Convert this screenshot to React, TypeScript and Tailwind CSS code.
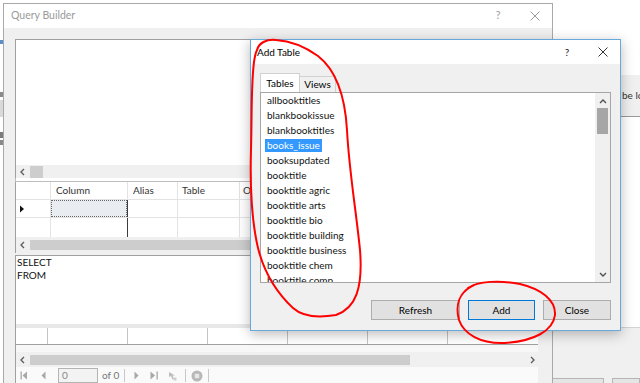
import { FC } from "react";

const tables = [
  "allbooktitles",
  "blankbookissue",
  "blankbooktitles",
  "books_issue",
  "booksupdated",
  "booktitle",
  "booktitle agric",
  "booktitle arts",
  "booktitle bio",
  "booktitle building",
  "booktitle business",
  "booktitle chem",
  "booktitle comp",
];

const Chevron: FC<{ dir: "left" | "right" | "up" | "down"; color?: string }> = ({ dir, color = "#606060" }) => {
  const d = {
    left: "M5 1 L2 4 L5 7",
    right: "M3 1 L6 4 L3 7",
    up: "M1 5 L4 2 L7 5",
    down: "M1 3 L4 6 L7 3",
  }[dir];
  return (
    <svg width="8" height="8" viewBox="0 0 8 8" className="shrink-0">
      <path d={d} fill="none" stroke={color} strokeWidth="1.4" />
    </svg>
  );
};

const CloseX: FC<{ color: string }> = ({ color }) => (
  <svg width="10" height="10" viewBox="0 0 10 10" className="shrink-0">
    <path d="M0.5 0.5 L9.5 9.5 M9.5 0.5 L0.5 9.5" stroke={color} strokeWidth="1" />
  </svg>
);

const Sep = () => <div className="w-[1px] h-[13px] bg-[#c8c8c8] shrink-0" />;

// window peeking out behind, on the right
const BackWindow: FC = () => (
  <div className="absolute left-[552px] top-0 w-[88px] h-[383px] bg-white flex flex-col">
    <div className="h-[75px]" />
    <div className="h-[42px] bg-[#f0f0f0] border-b border-[#9a9a9a] flex items-center pl-[70px] text-[10px] text-[#333] whitespace-nowrap">
      be loaded
    </div>
    <div className="h-[210px]" />
    <div className="flex-1 bg-[#f0f0f0] border-t border-[#d4d4d4] flex items-end gap-[8px]">
      <div className="w-[55px] h-[5px] border border-b-0 border-[#b5b5b5] bg-[#e5e5e5]" />
      <div className="w-[30px] h-[5px] border border-b-0 border-[#b5b5b5] bg-[#e5e5e5]" />
    </div>
  </div>
);

const LeftStrip: FC = () => (
  <div className="absolute left-0 top-0 w-[3px] h-[383px] bg-white flex flex-col">
    <div className="h-[40px]" />
    <div className="h-[4px] bg-[#5b8fc9]" />
    <div className="h-[48px]" />
    <div className="h-[5px] bg-[#8a8a8a]" />
    <div className="h-[3px]" />
    <div className="h-[17px] bg-[#d9d9d9]" />
    <div className="h-[15px]" />
    <div className="h-[6px] bg-[#7c7c7c]" />
    <div className="h-[2px]" />
    <div className="h-[5px] bg-[#8a8a8a]" />
  </div>
);

const QueryBuilder: FC = () => (
  <div className="absolute left-[3px] top-[3px] w-[550px] h-[400px] border border-[#a9a9a9] bg-[#f0f0f0] flex flex-col">
    <div className="h-[24px] bg-white flex items-center pl-[7px] text-[10.5px] text-[#9a9a9a]">
      <span className="flex-1">Query Builder</span>
      <span className="w-[10px] text-center">?</span>
      <span className="ml-[27px] mr-[12px] flex">
        <CloseX color="#9a9a9a" />
      </span>
    </div>

    <div className="pl-[11px] pt-[11px]">
      <div className="w-[523px] flex flex-col text-[10px] text-black">
        {/* diagram pane */}
        <div className="h-[139px] border-t border-l border-[#a0a0a0] flex flex-col">
          <div className="flex-1 bg-white" />
          <div className="h-[13px] bg-[#f0f0f0] flex items-center">
            <span className="ml-[3px] flex">
              <Chevron dir="left" />
            </span>
            <div className="ml-[3px] w-[13px] h-[12px] bg-[#cdcdcd]" />
          </div>
        </div>
        <div className="h-[4px] bg-white border-l border-b border-[#bdbdbd]" />

        {/* criteria grid */}
        <div className="bg-white border-l border-[#a0a0a0]">
          <div className="flex h-[18px] border-b border-[#e3e3e3]">
            <div className="w-[35px] border-r border-[#e3e3e3]" />
            <div className="w-[77px] border-r border-[#e3e3e3] pl-[5px] flex items-center text-[#333]">Column</div>
            <div className="w-[50px] border-r border-[#e3e3e3] pl-[5px] flex items-center text-[#333]">Alias</div>
            <div className="w-[62px] border-r border-[#e3e3e3] pl-[4px] flex items-center text-[#333]">Table</div>
            <div className="flex-1 pl-[3px] flex items-center text-[#333]">Output</div>
          </div>
          <div className="flex h-[18px] border-b border-[#e3e3e3]">
            <div className="w-[35px] border-r border-[#e3e3e3] flex items-center pl-[3px]">
              <svg width="6" height="8" viewBox="0 0 6 8">
                <path d="M1 0.5 L5 4 L1 7.5 Z" fill="#111" />
              </svg>
            </div>
            <div className="w-[77px] border-r border-[#3c3c3c]">
              <div className="h-full bg-[#e9edf1] border border-dotted border-[#6a6a6a]" />
            </div>
            <div className="w-[50px] border-r border-[#e3e3e3]" />
            <div className="w-[62px] border-r border-[#e3e3e3]" />
            <div className="flex-1" />
          </div>
          <div className="flex h-[19px]">
            <div className="w-[35px] border-r border-[#e3e3e3]" />
            <div className="w-[77px] border-r border-[#3c3c3c]" />
            <div className="w-[50px] border-r border-[#e3e3e3]" />
            <div className="w-[62px] border-r border-[#e3e3e3]" />
            <div className="flex-1" />
          </div>
        </div>
        <div className="h-[16px] bg-[#f0f0f0] border-l border-[#a0a0a0] flex items-center">
          <span className="ml-[3px] flex">
            <Chevron dir="left" />
          </span>
          <div className="ml-[3px] flex-1 h-[10px] bg-[#cdcdcd]" />
        </div>
        <div className="h-[3px] bg-[#f0f0f0] border-b border-[#a0a0a0]" />

        {/* sql pane */}
        <div className="h-[68px] bg-white border-l border-[#a0a0a0] pl-[1px] leading-[13px] text-[#111]">
          <div>SELECT</div>
          <div>FROM</div>
        </div>
        <div className="h-[4px] bg-[#e8e8e8] border-l border-[#a0a0a0]" />

        {/* results */}
        <div className="h-[17px] bg-white flex border-l border-b border-[#a0a0a0]">
          <div className="w-[32px] border-r border-[#c4c4c4]" />
          <div className="w-[80px] border-r border-[#c4c4c4]" />
          <div className="w-[80px] border-r border-[#c4c4c4]" />
          <div className="w-[80px] border-r border-[#c4c4c4]" />
          <div className="w-[80px] border-r border-[#c4c4c4]" />
          <div className="w-[80px] border-r border-[#c4c4c4]" />
          <div className="flex-1" />
        </div>
        <div className="h-[7px] bg-[#f7f7f7] border-l border-[#a0a0a0]" />
        <div className="h-[15px] bg-[#f0f0f0] border-l border-[#a0a0a0] flex items-center">
          <span className="ml-[3px] flex">
            <Chevron dir="left" />
          </span>
          <div className="ml-[3px] w-[380px] h-[10px] bg-[#cdcdcd]" />
          <div className="flex-1" />
          <span className="mr-[2px] flex">
            <Chevron dir="right" />
          </span>
        </div>

        {/* navigator */}
        <div className="h-[17px] bg-[#fafafa] border-l border-[#a0a0a0] flex items-center text-[#777]">
          <svg width="8" height="9" viewBox="0 0 8 9" className="ml-[4px] shrink-0">
            <rect x="0.5" y="0.5" width="1.3" height="8" fill="#a8a8a8" />
            <path d="M7 0.5 L2.5 4.5 L7 8.5 Z" fill="#a8a8a8" />
          </svg>
          <svg width="5" height="9" viewBox="0 0 5 9" className="ml-[13px] shrink-0">
            <path d="M4.5 0.5 L0.5 4.5 L4.5 8.5 Z" fill="#a8a8a8" />
          </svg>
          <div className="ml-[12px] w-[40px] h-[15px] border border-[#b4b4b4] bg-[#f3f3f3] pl-[3px] leading-[13px] text-[#888]">
            0
          </div>
          <span className="ml-[4px] text-[#777]">of 0</span>
          <span className="ml-[5px] flex">
            <Sep />
          </span>
          <svg width="5" height="9" viewBox="0 0 5 9" className="ml-[9px] shrink-0">
            <path d="M0.5 0.5 L4.5 4.5 L0.5 8.5 Z" fill="#a8a8a8" />
          </svg>
          <svg width="9" height="9" viewBox="0 0 9 9" className="ml-[11px] shrink-0">
            <path d="M0.5 0.5 L5 4.5 L0.5 8.5 Z" fill="#a8a8a8" />
            <rect x="6.5" y="0.5" width="1.3" height="8" fill="#a8a8a8" />
          </svg>
          <svg width="9" height="10" viewBox="0 0 9 10" className="ml-[9px] shrink-0">
            <path d="M1 1 L1 6 L3 5 L4.5 8.5 L6 8 L4.5 4.5 L7 4.5 Z" fill="#bdbdbd" />
            <rect x="5.5" y="6.5" width="3" height="3" fill="#cfcfcf" />
          </svg>
          <span className="ml-[8px] flex">
            <Sep />
          </span>
          <svg width="12" height="12" viewBox="0 0 12 12" className="ml-[5px] shrink-0">
            <circle cx="6" cy="6" r="5.5" fill="#b8b8b8" />
            <rect x="3.8" y="3.8" width="4.4" height="4.4" fill="#e8e8e8" />
          </svg>
          <span className="ml-[5px] flex">
            <Sep />
          </span>
        </div>
      </div>
    </div>
  </div>
);

const AddTable: FC = () => (
  <div className="absolute left-[250px] top-[39px] w-[371px] h-[292px] border border-[#67a9d9] bg-[#f0f0f0] shadow-[0_3px_12px_rgba(0,0,0,0.28)] flex flex-col text-[10px] text-black">
    <div className="h-[24px] bg-white flex items-center pl-[6px]">
      <span className="flex-1">Add Table</span>
      <span className="w-[10px] text-center text-[#222]">?</span>
      <span className="ml-[26px] mr-[12px] flex">
        <CloseX color="#333" />
      </span>
    </div>
    <div className="pl-[9px] pt-[9px] flex flex-col w-[360px]">
      <div className="flex items-end h-[19px]">
        <div className="w-[40px] h-[19px] bg-white border border-b-0 border-[#d0d0d0] flex items-center justify-center">
          Tables
        </div>
        <div className="w-[36px] h-[16px] border-t border-r border-[#d0d0d0] flex items-center justify-center">
          Views
        </div>
      </div>
      <div className="w-[351px] h-[191px] bg-white border border-[#a6a6a6] flex">
        <div className="flex-1 overflow-hidden pl-[4px]">
          {tables.map((t) => (
            <div key={t} className="h-[15px] flex items-center whitespace-nowrap">
              <span
                className={
                  t === "books_issue"
                    ? "px-[2px] leading-[13px] bg-[#3399ff] text-white"
                    : "px-[2px] leading-[13px] text-[#111]"
                }
              >
                {t}
              </span>
            </div>
          ))}
        </div>
        <div className="w-[15px] bg-[#f0f0f0] flex flex-col items-center">
          <div className="mt-[5px] flex">
            <Chevron dir="up" color="#505050" />
          </div>
          <div className="mt-[2px] w-[11px] h-[26px] bg-[#a6a6a6]" />
          <div className="flex-1" />
          <div className="mb-[4px] flex">
            <Chevron dir="down" color="#505050" />
          </div>
        </div>
      </div>
      <div className="mt-[17px] w-[351px] flex justify-end gap-[8px]">
        <button className="w-[89px] h-[20px] bg-[#e1e1e1] border border-[#adadad] text-black">Refresh</button>
        <button className="w-[67px] h-[20px] bg-[#e1e1e1] border border-[#0078d7] text-black">Add</button>
        <button className="w-[68px] h-[20px] bg-[#e1e1e1] border border-[#adadad] text-black">Close</button>
      </div>
    </div>
  </div>
);

// hand-drawn red marks on top of the screenshot
const Annotations: FC = () => (
  <svg width="640" height="383" viewBox="0 0 640 383" className="absolute left-0 top-0 pointer-events-none">
    <path
      d="M257 50 C259 43 266 39 276 40 C292 41 304 46 318 56 C336 70 345 95 347 130 C349 170 356 210 360 250 C363 288 356 308 336 315 C318 318 303 317 293 308 C278 294 265 276 258 248 C251 218 250 185 251 150 C252 115 251 85 254 62 C255 55 256 52 257 50"
      fill="none"
      stroke="#ff0000"
      strokeWidth="2"
      strokeLinecap="round"
    />
    <path
      d="M468 288 C478 281 500 280 520 284 C541 289 556 300 555 315 C553 331 534 341 505 343 C480 344 464 334 459 320 C455 305 459 292 474 285"
      fill="none"
      stroke="#ff0000"
      strokeWidth="2"
      strokeLinecap="round"
    />
  </svg>
);

export default function App() {
  return (
    <div className="relative w-[640px] h-[383px] overflow-hidden bg-white font-['Lato','Liberation_Sans',sans-serif]">
      <LeftStrip />
      <BackWindow />
      <QueryBuilder />
      <AddTable />
      <Annotations />
    </div>
  );
}
